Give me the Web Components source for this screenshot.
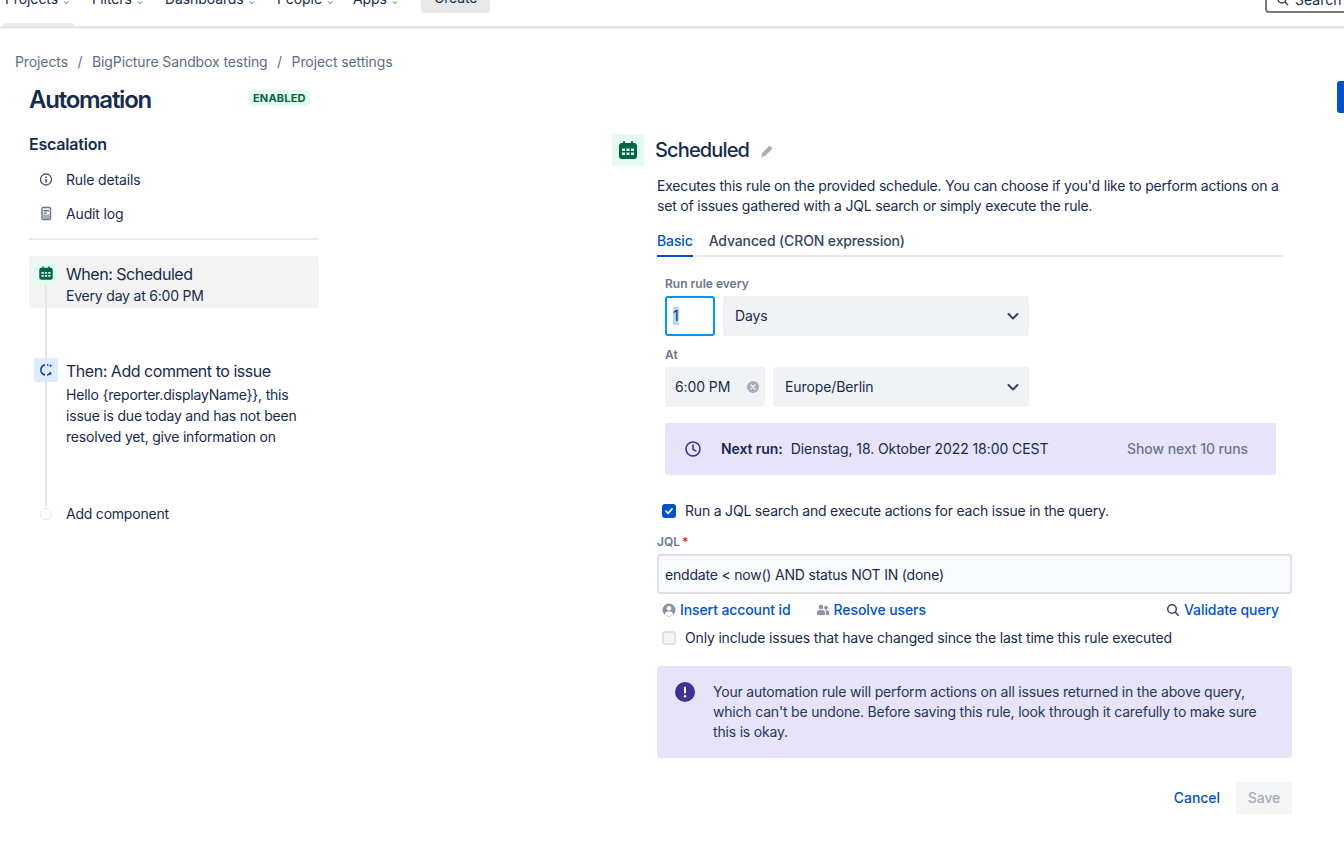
<!DOCTYPE html>
<html lang="en"><head><meta charset="utf-8"><title>Automation</title>
<style>
html,body{margin:0;padding:0;background:#fff;overflow:hidden;height:860px}
body{font:14px/20px Inter,"Liberation Sans",sans-serif;color:#172b4d;-webkit-font-smoothing:antialiased}
</style></head><body>
<app-header></app-header>
<bread-crumbs></bread-crumbs>
<page-body>
  <rule-sidebar slot="left"></rule-sidebar>
  <sched-panel slot="right"></sched-panel>
</page-body>
<script>
const def=(name,html)=>customElements.define(name,class extends HTMLElement{
  connectedCallback(){ if(!this.shadowRoot){this.attachShadow({mode:'open'}).innerHTML=typeof html==='function'?html(this):html;} }
});
const CAL=(c,l)=>`<svg viewBox="0 0 24 24" width="100%" height="100%"><path fill="${c}" d="M6 5h1V4a1 1 0 0 1 2 0v1h6V4a1 1 0 0 1 2 0v1h1a3 3 0 0 1 3 3v10a3 3 0 0 1-3 3H6a3 3 0 0 1-3-3V8a3 3 0 0 1 3-3z"/><path fill="${l}" d="M6 10.500h3v2.500H6zm4.500 0h3v2.500h-3zm4.500 0h3v2.500h-3zM6 14.500h3V17H6zm4.500 0h3V17h-3zm4.500 0h3V17h-3z"/></svg>`;
const CHEV=`<svg viewBox="0 0 24 24" width="24" height="24"><path fill="none" stroke="#344563" stroke-width="2" stroke-linecap="round" stroke-linejoin="round" d="M7.500 10l4.500 4.500 4.500-4.500"/></svg>`;

def('app-header',`<style>
:host{display:flex;align-items:flex-end;height:26px;border-bottom:2px solid #e4e6ea;overflow:hidden;box-shadow:0 1px 1px #f4f5f7}
.n{flex:none;height:37px;position:relative;font-size:14px;line-height:20px;color:#172b4d;white-space:nowrap;letter-spacing:-.1px}
.n::after{content:"⌄";font-size:8px;color:#6b778c;margin-left:5px}
.a{margin-left:5px;width:87px}
.a::before{content:"";position:absolute;left:-2px;right:18px;bottom:0;height:3px;background:#ebecf0;border-radius:2px 2px 0 0}
.c{margin-left:34px;margin-bottom:13px;height:30px;background:#e8e8e8;border-radius:3px;flex:none;display:flex;align-items:flex-end;padding:0 0 5px 13px;box-sizing:border-box;width:69px;font-size:14px;line-height:20px;letter-spacing:-.1px}
.s{margin-left:auto;margin-bottom:13px;width:79px;height:30px;box-sizing:border-box;border:2px solid #7a7a7a;border-right:0;border-radius:4px 0 0 4px;display:flex;align-items:flex-end;gap:6px;padding:0 0 3px 10px;font-size:14px;line-height:16px;flex:none}
svg{flex:none;margin-bottom:2px}
</style>
<div class="n a">Projects</div><div class="n" style="width:73px">Filters</div><div class="n" style="width:112px">Dashboards</div><div class="n" style="width:76px">People</div><div class="n" style="width:34px">Apps</div>
<div class="c">Create</div><div class="s"><svg width="12" height="12" viewBox="0 0 12 12"><circle cx="5" cy="5" r="4" fill="none" stroke="#444" stroke-width="1.500"/><path d="M8 8l3 3" stroke="#444" stroke-width="1.500"/></svg>Search</div>`);

def('bread-crumbs',`<style>
:host{display:flex;margin:24px 0 0 15px;height:20px;color:#5e6c84;font-size:14px;line-height:20px;letter-spacing:-.1px}
i{font-style:normal;width:24px;text-align:center}
</style><span>Projects</span><i>/</i><span>BigPicture Sandbox testing</span><i>/</i><span>Project settings</span>`);

def('page-body',`<style>
:host{display:grid;grid-template-columns:290px 635px;column-gap:338px;padding:0 0 0 29px;position:relative}
.tab{position:absolute;right:0;top:9px;width:7px;height:32px;background:#0052cc;border-radius:3px 0 0 3px}
</style><slot name="left"></slot><slot name="right"></slot><div class="tab"></div>`);

def('side-link',h=>`<style>
:host{display:flex;align-items:center;height:20px;gap:12px;padding-left:9px;font-size:14px;letter-spacing:-.15px}
svg{width:16px;height:16px;flex:none}
</style>${h.getAttribute('icon')==='info'
?`<svg viewBox="0 0 16 16"><circle cx="8" cy="7.500" r="5.500" fill="none" stroke="#42526e" stroke-width="1.300"/><rect x="7.300" y="7" width="1.400" height="3.500" fill="#42526e"/><circle cx="8" cy="5.200" r=".9" fill="#42526e"/></svg>`
:`<svg viewBox="0 0 16 16"><rect x="4" y="1.500" width="8.500" height="12" rx="1.300" fill="none" stroke="#6b778c" stroke-width="1.500"/><rect x="5.500" y="4" width="5.500" height="1.500" fill="#6b778c"/><rect x="5.500" y="6.500" width="3.500" height="1.300" fill="#6b778c"/><rect x="4.500" y="8.500" width="7.500" height="4.500" fill="#a5adba"/></svg>`}<span><slot></slot></span>`);

def('rule-step',h=>`<style>
:host{display:block;position:relative;padding:5px 5px 0 37px;border-radius:4px}
:host([selected]){background:#f3f3f4;height:52px;box-sizing:border-box}
.ic{position:absolute;left:5px;top:5px;width:24px;height:24px;border-radius:3px;display:flex;align-items:center;justify-content:center;background:${h.getAttribute('tint')}}
.t{font-size:16px;line-height:24px;margin-top:1px;letter-spacing:-.47px}
.d{font-size:14px;line-height:21px;width:240px;letter-spacing:-.2px;margin-top:1px}
:host([selected]) .d{margin-top:-1px}
</style><div class="ic"><slot name="icon"></slot></div><div class="t">${h.getAttribute('heading')}</div><div class="d"><slot></slot></div>`);

def('rule-sidebar',()=>`<style>
:host{display:block;position:relative}
h1{font-size:24px;line-height:28px;font-weight:600;margin:0;letter-spacing:-1.25px}
.head{display:flex;align-items:center;height:28px;margin-top:14px}
.b{margin-left:98px;height:16px;background:#e3fcef;color:#006644;border-radius:3px;font-size:11px;font-weight:700;line-height:16px;padding:0 4px;letter-spacing:.2px;margin-top:-4px}
h2{font-size:16px;line-height:20px;font-weight:600;margin:20px 0 0;letter-spacing:-.2px}
side-link{margin-top:14px}
side-link.f{margin-top:16px}
hr{border:0;height:2px;background:#e8e8ef;margin:14px 0 16px}
.flow{position:relative}
.line{position:absolute;left:16px;top:29px;width:2px;height:222px;background:#e4e6ea}
.gap{height:45px}
.add{display:flex;align-items:center;height:20px;gap:14px;margin-top:57px;padding-left:11px;position:relative;letter-spacing:-.22px}
.dot{width:12px;height:12px;border-radius:50%;border:1.500px solid #e4e6ea;background:#fff;box-sizing:border-box;flex:none;position:relative;z-index:1}
</style>
<div class="head"><h1>Automation</h1><span class="b">ENABLED</span></div>
<h2>Escalation</h2>
<side-link class="f" icon="info">Rule details</side-link>
<side-link icon="page">Audit log</side-link>
<hr>
<div class="flow">
<rule-step selected tint="#e3fcef" heading="When: Scheduled"><span slot="icon" style="display:flex;width:18px;height:18px">${CAL('#006644','#e3fcef')}</span>Every day at 6:00 PM</rule-step>
<div class="gap"></div>
<rule-step tint="#deebff" heading="Then: Add comment to issue"><svg slot="icon" style="width:18px;height:18px;display:block" viewBox="0 0 18 18"><path d="M13.200 12A5.200 5.200 0 1 1 10.800 4" fill="none" stroke="#0747a6" stroke-width="1.700" stroke-linecap="round"/><path d="M14 10.800l.4 3-3-.4zM13.700 3l.5 1.300 1.300.5-1.300.5-.5 1.300-.5-1.300-1.300-.5 1.300-.5z" fill="#0747a6"/></svg>Hello {reporter.displayName}}, this issue is due today and has not been resolved yet, give information on</rule-step>
<div class="line"></div>
<div class="add"><span class="dot"></span><span>Add component</span></div>
</div>`);

def('sel-box',`<style>
:host{display:flex;align-items:center;justify-content:space-between;height:40px;background:#f1f2f6;border-radius:3px;box-sizing:border-box;padding:0 4px 0 12px;font-size:14px;letter-spacing:-.1px}
</style><span><slot></slot></span>${CHEV}`);

def('note-box',`<style>
:host{display:flex;background:#e6e3fa;border-radius:3px}
</style><slot></slot>`);

def('check-row',h=>`<style>
:host{display:flex;align-items:center;height:20px;gap:9px;padding-left:5px;font-size:14px;letter-spacing:-.2px}
.c{width:14px;height:14px;box-sizing:border-box;border-radius:3px;flex:none;display:flex;align-items:center;justify-content:center}
.on{background:#0052cc}.off{background:#f4f5f7;border:2px solid #dfe1e6}
</style><span class="c ${h.hasAttribute('checked')?'on':'off'}">${h.hasAttribute('checked')?'<svg width="10" height="10" viewBox="0 0 10 10"><path d="M2 5.200l2.200 2.100L8 2.900" fill="none" stroke="#fff" stroke-width="1.700" stroke-linecap="round" stroke-linejoin="round"/></svg>':''}</span><span><slot></slot></span>`);

def('sched-panel',()=>`<style>
:host{display:block;position:relative}
.hd{display:flex;align-items:center;height:32px;margin:62px 0 0 -45px}
.hi{width:32px;height:32px;background:#e3fcef;border-radius:3px;display:flex;align-items:center;justify-content:center;flex:none}
.hi span{width:24px;height:24px;display:flex}
.hd h2{font-size:20px;line-height:32px;font-weight:500;margin:0 0 0 11px;letter-spacing:-.85px}
.pen{margin-left:11px;margin-top:2px}
p{margin:10px 0 0;width:635px;font-size:14px;line-height:20px;letter-spacing:-.19px}
.tabs{display:flex;width:627px;height:27px;margin-top:12px;border-bottom:2px solid #e8e8ef;font-weight:500;color:#344563;font-size:14px;line-height:20px;letter-spacing:-.13px}
.tabs span{height:27px;box-sizing:border-box;padding-top:3px}
.tabs .on{color:#0052cc;border-bottom:2px solid #0052cc;height:29px;margin-right:16px}
.form{padding-left:8px}
label{display:block;font-size:12px;line-height:16px;font-weight:600;color:#6b778c}
.row{display:flex;gap:8px;margin-top:4px}
.num{width:50px;height:40px;box-sizing:border-box;border:2px solid #0095ff;border-radius:3px;padding:0 6px;display:flex;align-items:center;font-size:14px}
.num b{font-weight:400;background:#b4d7ff;line-height:18px}
.time{width:100px;height:40px;background:#f1f2f6;border-radius:3px;display:flex;align-items:center;justify-content:space-between;padding:0 5px 0 10px;box-sizing:border-box;letter-spacing:-.1px}
.run{width:611px;height:52px;align-items:center;margin-top:16px;box-sizing:border-box;padding:0 28px 0 20px;letter-spacing:-.08px}
.run span.k{font-weight:600;margin:0 8px 0 20px}
.run .m{margin-left:auto;color:#6b778c;font-weight:500}
.in{height:40px;box-sizing:border-box;border:2px solid #dfe1e6;border-radius:3px;background:#f9fafb;display:flex;align-items:center;padding:2px 6px 0;margin-top:4px;letter-spacing:-.2px}
.links{display:flex;align-items:center;height:20px;margin-top:6px;padding-left:5px;color:#0052cc;font-weight:500;letter-spacing:-.1px}
.links span{display:flex;align-items:center;gap:3px}
.warn{height:92px;margin-top:18px;padding:16px 30px 0 18px;box-sizing:border-box;align-items:flex-start;color:#253858;letter-spacing:-.19px}
.warn svg{flex:none;margin-right:18px}
.warn div{line-height:20px}
.act{display:flex;justify-content:flex-end;align-items:center;margin-top:24px;color:#0052cc;font-weight:500;letter-spacing:-.05px}
.save{width:56px;height:32px;background:#f4f5f7;color:#a5adba;border-radius:3px;display:flex;align-items:center;justify-content:center;margin-left:16px}
.req{color:#de350b;margin-left:2px}
</style>
<div class="hd"><div class="hi"><span>${CAL('#006644','#e3fcef')}</span></div><h2>Scheduled</h2>
<svg class="pen" width="14" height="14" viewBox="0 0 14 14"><path fill="#a5adba" d="M9.500 1.500l3 3-7.500 7.500-3.500.7.700-3.700zM1 13h2v.5H1z"/></svg></div>
<p>Executes this rule on the provided schedule. You can choose if you'd like to perform actions on a set of issues gathered with a JQL search or simply execute the rule.</p>
<div class="tabs"><span class="on">Basic</span><span>Advanced (CRON expression)</span></div>
<div class="form">
<label style="margin-top:19px">Run rule every</label>
<div class="row"><div class="num"><b>1</b></div><sel-box style="width:306px">Days</sel-box></div>
<label style="margin-top:11px">At</label>
<div class="row"><div class="time"><span>6:00 PM</span><svg width="14" height="14" viewBox="0 0 14 14"><circle cx="7" cy="7" r="6" fill="#a5adba"/><path d="M5 5l4 4M9 5l-4 4" stroke="#f1f2f6" stroke-width="1.500" stroke-linecap="round"/></svg></div><sel-box style="width:256px">Europe/Berlin</sel-box></div>
<note-box class="run" style="display:flex"><svg width="16" height="16" viewBox="0 0 16 16" style="flex:none"><circle cx="8" cy="8" r="7" fill="none" stroke="#403294" stroke-width="1.600"/><path d="M8 4v4.300l2.700 1.600" fill="none" stroke="#403294" stroke-width="1.600" stroke-linecap="round" stroke-linejoin="round"/></svg><span class="k">Next run:</span><span>Dienstag, 18. Oktober 2022 18:00 CEST</span><span class="m">Show next 10 runs</span></note-box>
</div>
<check-row checked style="margin-top:26px">Run a JQL search and execute actions for each issue in the query.</check-row>
<label style="margin-top:13px">JQL<span class="req">*</span></label>
<div class="in">enddate &lt; now() AND status NOT IN (done)</div>
<div class="links"><span><svg width="16" height="16" viewBox="0 0 16 16" style="margin-left:-1px"><circle cx="8" cy="8" r="6.500" fill="#8993a4"/><circle cx="8" cy="6.300" r="2.300" fill="#fff"/><path d="M3.800 12.500c.6-2.300 2.200-3.200 4.200-3.200s3.600.9 4.200 3.200A6 6 0 0 1 8 14a6 6 0 0 1-4.200-1.500z" fill="#fff"/></svg>Insert account id</span>
<span style="margin-left:24px;gap:3px"><svg width="16" height="16" viewBox="0 0 16 16"><circle cx="6" cy="5" r="2.300" fill="#8993a4"/><circle cx="11" cy="5.700" r="1.900" fill="#8993a4"/><path d="M2 13v-2.500C2 9 3.500 8 6 8s4 1 4 2.500V13zM11 13v-2.500c0-.9-.3-1.600-.9-2.200.3-.1.700-.1 1-.1 2 0 3 .9 3 2.300V13z" fill="#8993a4"/></svg>Resolve users</span>
<span style="margin-left:auto;margin-right:13px;gap:3px"><svg width="16" height="16" viewBox="0 0 16 16"><circle cx="7" cy="7" r="4.300" fill="none" stroke="#344563" stroke-width="1.500"/><path d="M10.300 10.300l3 3" stroke="#344563" stroke-width="1.500" stroke-linecap="round"/></svg>Validate query</span></div>
<check-row style="margin-top:8px;letter-spacing:-.17px">Only include issues that have changed since the last time this rule executed</check-row>
<note-box class="warn" style="display:flex"><svg width="20" height="20" viewBox="0 0 20 20"><circle cx="10" cy="10" r="10" fill="#403294"/><rect x="9" y="4.500" width="2" height="7" rx="1" fill="#fff"/><circle cx="10" cy="14.200" r="1.200" fill="#fff"/></svg><div>Your automation rule will perform actions on all issues returned in the above query, which can't be undone. Before saving this rule, look through it carefully to make sure this is okay.</div></note-box>
<div class="act"><span>Cancel</span><span class="save">Save</span></div>`);
</script>
</body></html>
